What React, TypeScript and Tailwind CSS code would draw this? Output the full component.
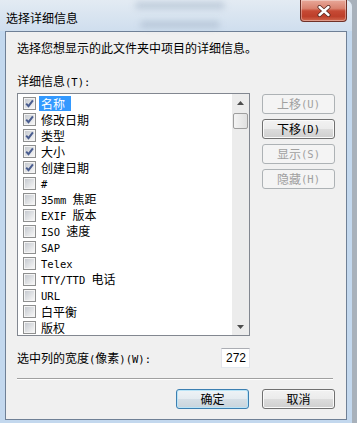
import * as React from "react";

const CJK = /[\u3000-\u303f\u4e00-\u9fff\uff00-\uffef]/;

// CJK runs in the UI font, latin runs in a narrow fixed-width face (like SimSun's half-width glyphs)
const Label = ({ text }: { text: string }) => (
  <>
    {text
      .split(/([\u3000-\u303f\u4e00-\u9fff\uff00-\uffef]+)/)
      .filter(Boolean)
      .map((part, i) =>
        CJK.test(part) ? (
          <span key={i}>{part}</span>
        ) : (
          <span key={i} className="font-['DejaVu_Sans_Mono',monospace] text-[10.5px] whitespace-pre">
            {part}
          </span>
        )
      )}
  </>
);

const items = [
  { label: "名称", checked: true, selected: true },
  { label: "修改日期", checked: true },
  { label: "类型", checked: true },
  { label: "大小", checked: true },
  { label: "创建日期", checked: true },
  { label: "#" },
  { label: "35mm 焦距" },
  { label: "EXIF 版本" },
  { label: "ISO 速度" },
  { label: "SAP" },
  { label: "Telex" },
  { label: "TTY/TTD 电话" },
  { label: "URL" },
  { label: "白平衡" },
  { label: "版权" },
];

const Checkbox = ({ checked }: { checked?: boolean }) => (
  <div className="h-[13px] w-[13px] shrink-0 border border-[#8e8f8f] bg-[#f4f4f4] p-[1px]">
    <div className="flex h-full w-full items-center justify-center bg-gradient-to-br from-[#c6cad0] to-[#f6f6f6]">
      {checked && (
        <svg width="9" height="9" viewBox="0 0 9 9">
          <path d="M1.2 4.6 L3.5 7.2 L7.9 1.4" fill="none" stroke="#4a5d8f" strokeWidth="2" />
        </svg>
      )}
    </div>
  </div>
);

const Button = ({
  text,
  kind = "normal",
}: {
  text: string;
  kind?: "normal" | "disabled" | "default";
}) => {
  const base =
    "flex h-[20px] w-[73px] items-center justify-center rounded-[3px] border text-[12px] leading-[16px]";
  if (kind === "disabled") {
    return (
      <div className={`${base} border-[#adb2b5] bg-[#f4f4f4] text-[#a0a0a0]`}>
        <Label text={text} />
      </div>
    );
  }
  if (kind === "default") {
    return (
      <div
        className={`${base} border-[#3c7fb1] bg-[linear-gradient(to_bottom,#eef3f6_0%,#e4ebf0_50%,#d6dfe6_50%,#c9d4dc_100%)] text-black shadow-[inset_0_0_0_1px_#b9e4f7]`}
      >
        <Label text={text} />
      </div>
    );
  }
  return (
    <div
      className={`${base} border-[#707070] bg-[linear-gradient(to_bottom,#f2f2f2_0%,#ebebeb_50%,#dddddd_50%,#cfcfcf_100%)] text-black shadow-[inset_0_0_0_1px_#fafafa]`}
    >
      <Label text={text} />
    </div>
  );
};

const Arrow = ({ up }: { up?: boolean }) => (
  <div className="flex h-[17px] w-full items-center justify-center">
    <svg width="7" height="4" viewBox="0 0 7 4">
      <path d={up ? "M0 4 L3.5 0 L7 4 Z" : "M0 0 L7 0 L3.5 4 Z"} fill="#4d4d4d" />
    </svg>
  </div>
);

const CloseButton = () => (
  <div className="flex h-[22px] w-[47px] items-center justify-center rounded-b-[4px] border border-t-0 border-[#6f3128] bg-[linear-gradient(to_bottom,#e8a899_0%,#d9826f_40%,#c64a35_52%,#bd3f2a_78%,#d26a50_100%)] shadow-[inset_0_0_0_1px_rgba(255,255,255,0.35)]">
    <svg width="14" height="12" viewBox="0 0 14 12">
      <path d="M2.5 2 L11.5 10 M11.5 2 L2.5 10" stroke="#5a2a22" strokeWidth="4" strokeLinecap="round" />
      <path d="M2.5 2 L11.5 10 M11.5 2 L2.5 10" stroke="#ffffff" strokeWidth="2.4" strokeLinecap="round" />
    </svg>
  </div>
);

export default function App() {
  return (
    <div className="h-[423px] w-[357px] overflow-hidden bg-[#a8b1bb] font-['Noto_Sans_CJK_SC',sans-serif] text-black">
      <div className="flex h-[423px] w-[352px] flex-col rounded-tr-[7px] bg-[#c3d8ee]">
        {/* title bar */}
        <div className="relative flex h-[31px] items-start justify-between rounded-tr-[7px] bg-gradient-to-b from-[#e3ebf3] to-[#cfdeee] pl-[6px] pr-[5px]">
          <div className="absolute left-[135px] top-[2px] h-[7px] w-[90px] rounded-full bg-[#9fb0c4] opacity-50 blur-[3px]" />
          <div className="absolute left-[140px] top-[21px] h-[7px] w-[80px] rounded-full bg-[#9fb0c4] opacity-50 blur-[3px]" />
          <span className="relative mt-[10px] text-[12px] leading-[16px]">选择详细信息</span>
          <CloseButton />
        </div>

        {/* client area */}
        <div className="mx-[5px] h-[389px] border border-[#6f8096] bg-[#f0f0f0] pl-[11px] pr-[11px] text-[12px] leading-[16px]">
          <div className="mt-[8px]">
            <Label text="选择您想显示的此文件夹中项目的详细信息。" />
          </div>
          <div className="mt-[17px]">
            <Label text="详细信息(T):" />
          </div>

          <div className="mt-[3px] flex items-start">
            <div className="flex h-[243px] w-[233px] border border-[#828790] bg-white">
              <div className="flex-1 overflow-hidden pt-[1px]">
                {items.map((it) => (
                  <div key={it.label} className="flex h-[16px] items-center pl-[5px]">
                    <Checkbox checked={it.checked} />
                    <span
                      className={`ml-[3px] whitespace-pre pl-[2px] pr-[6px] leading-[15px] ${
                        it.selected ? "bg-[#3399ff] text-white" : ""
                      }`}
                    >
                      <Label text={it.label} />
                    </span>
                  </div>
                ))}
              </div>
              <div className="flex w-[17px] flex-col bg-[#ececec]">
                <Arrow up />
                <div className="mx-[1px] mt-[2px] h-[16px] rounded-[2px] border border-[#9e9e9e] bg-[linear-gradient(to_right,#f4f4f4,#e0e0e0)]" />
                <div className="flex-1" />
                <Arrow />
              </div>
            </div>

            <div className="ml-[12px] flex flex-col gap-[5px] pt-[1px]">
              <Button text="上移(U)" kind="disabled" />
              <Button text="下移(D)" />
              <Button text="显示(S)" kind="disabled" />
              <Button text="隐藏(H)" kind="disabled" />
            </div>
          </div>

          <div className="mt-[12px] flex h-[20px] w-[233px] items-center justify-between">
            <span>
              <Label text="选中列的宽度(像素)(W):" />
            </span>
            <div className="flex h-[20px] w-[29px] items-center justify-end border border-[#e2e3ea] border-t-[#abadb3] border-b-[#e3e9ef] bg-white pr-[3px] font-['Liberation_Sans',sans-serif] text-[12px]">
              272
            </div>
          </div>

          <div className="mt-[10px] h-[2px] w-[316px] border-t border-b border-t-[#a0a0a0] border-b-white" />

          <div className="mt-[9px] flex justify-end gap-[13px]">
            <Button text="确定" kind="default" />
            <Button text="取消" />
          </div>
        </div>
      </div>
    </div>
  );
}
